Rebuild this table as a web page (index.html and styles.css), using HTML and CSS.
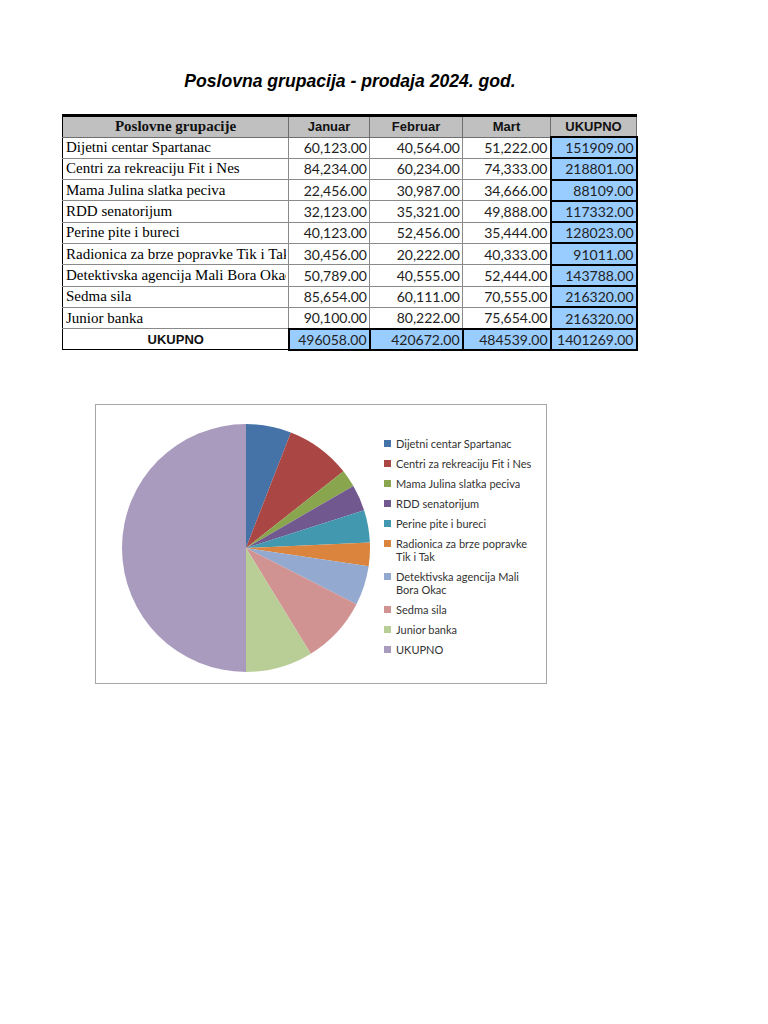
FILE: index.html
```html
<!DOCTYPE html>
<html lang="sr">
<head>
<meta charset="utf-8">
<title>Poslovna grupacija - prodaja 2024. god.</title>
<link rel="stylesheet" href="styles.css">
</head>
<body>
<div class="page">
  <h1 class="title">Poslovna grupacija - prodaja 2024. god.</h1>
  <table class="sheet">
    <colgroup>
      <col class="c-name"><col class="c-jan"><col class="c-feb"><col class="c-mar"><col class="c-tot">
    </colgroup>
    <thead>
      <tr>
        <th class="h-name">Poslovne grupacije</th>
        <th>Januar</th>
        <th>Februar</th>
        <th>Mart</th>
        <th>UKUPNO</th>
      </tr>
    </thead>
    <tbody>
      <tr><td class="name">Dijetni centar Spartanac</td><td>60,123.00</td><td>40,564.00</td><td>51,222.00</td><td class="sum">151909.00</td></tr>
      <tr><td class="name">Centri za rekreaciju Fit i Nes</td><td>84,234.00</td><td>60,234.00</td><td>74,333.00</td><td class="sum">218801.00</td></tr>
      <tr><td class="name">Mama Julina slatka peciva</td><td>22,456.00</td><td>30,987.00</td><td>34,666.00</td><td class="sum">88109.00</td></tr>
      <tr><td class="name">RDD senatorijum</td><td>32,123.00</td><td>35,321.00</td><td>49,888.00</td><td class="sum">117332.00</td></tr>
      <tr><td class="name">Perine pite i bureci</td><td>40,123.00</td><td>52,456.00</td><td>35,444.00</td><td class="sum">128023.00</td></tr>
      <tr><td class="name"><div class="clip">Radionica za brze popravke Tik i Tak</div></td><td>30,456.00</td><td>20,222.00</td><td>40,333.00</td><td class="sum">91011.00</td></tr>
      <tr><td class="name"><div class="clip">Detektivska agencija Mali Bora Okac</div></td><td>50,789.00</td><td>40,555.00</td><td>52,444.00</td><td class="sum">143788.00</td></tr>
      <tr><td class="name">Sedma sila</td><td>85,654.00</td><td>60,111.00</td><td>70,555.00</td><td class="sum">216320.00</td></tr>
      <tr><td class="name">Junior banka</td><td>90,100.00</td><td>80,222.00</td><td>75,654.00</td><td class="sum">216320.00</td></tr>
      <tr class="total"><td class="t-name">UKUPNO</td><td class="sum">496058.00</td><td class="sum">420672.00</td><td class="sum">484539.00</td><td class="sum">1401269.00</td></tr>
    </tbody>
  </table>

  <div class="chart">
    <svg class="pie" width="250" height="252" viewBox="-125 -126 250 252" aria-hidden="true">
      <path fill="#4572A7" d="M0 0 L0 -124 A124 124 0 0 1 44.84 -115.61 Z"/>
      <path fill="#AA4643" d="M0 0 L44.84 -115.61 A124 124 0 0 1 97.45 -76.68 Z"/>
      <path fill="#89A54E" d="M0 0 L97.45 -76.68 A124 124 0 0 1 107.39 -62 Z"/>
      <path fill="#71588F" d="M0 0 L107.39 -62 A124 124 0 0 1 118.13 -37.7 Z"/>
      <path fill="#4198AF" d="M0 0 L118.13 -37.7 A124 124 0 0 1 123.88 -5.41 Z"/>
      <path fill="#DB843D" d="M0 0 L123.88 -5.41 A124 124 0 0 1 122.64 18.33 Z"/>
      <path fill="#93A9CF" d="M0 0 L122.64 18.33 A124 124 0 0 1 110.48 56.3 Z"/>
      <path fill="#D19392" d="M0 0 L110.48 56.3 A124 124 0 0 1 64.79 105.72 Z"/>
      <path fill="#B9CD96" d="M0 0 L64.79 105.72 A124 124 0 0 1 0 124 Z"/>
      <path fill="#A99BBD" d="M0 0 L0 124 A124 124 0 0 1 0 -124 Z"/>
    </svg>
    <ul class="legend">
      <li><span class="sw" style="background:#4572A7"></span><span>Dijetni centar Spartanac</span></li>
      <li><span class="sw" style="background:#AA4643"></span><span>Centri za rekreaciju Fit i Nes</span></li>
      <li><span class="sw" style="background:#89A54E"></span><span>Mama Julina slatka peciva</span></li>
      <li><span class="sw" style="background:#71588F"></span><span>RDD senatorijum</span></li>
      <li><span class="sw" style="background:#4198AF"></span><span>Perine pite i bureci</span></li>
      <li><span class="sw" style="background:#DB843D"></span><span>Radionica za brze popravke Tik i Tak</span></li>
      <li><span class="sw" style="background:#93A9CF"></span><span>Detektivska agencija Mali Bora Okac</span></li>
      <li><span class="sw" style="background:#D19392"></span><span>Sedma sila</span></li>
      <li><span class="sw" style="background:#B9CD96"></span><span>Junior banka</span></li>
      <li><span class="sw" style="background:#A99BBD"></span><span>UKUPNO</span></li>
    </ul>
  </div>
</div>
</body>
</html>
```

FILE: styles.css
```css
html, body {
  margin: 0;
  padding: 0;
  background: #ffffff;
}

.page {
  padding: 68px 0 0 62px;
  width: 576px;
}

.title {
  margin: 0 0 20px 0;
  text-align: center;
  font-family: "Liberation Sans", Arial, sans-serif;
  font-weight: bold;
  font-style: italic;
  font-size: 17.6px;
  line-height: 26px;
  color: #000;
}

.sheet {
  border-collapse: collapse;
  table-layout: fixed;
  width: 574px;
  border-top: 3px solid #000;
}

.c-name { width: 226px; }
.c-jan { width: 81px; }
.c-feb { width: 93px; }
.c-mar { width: 88px; }
.c-tot { width: 86px; }

.sheet th {
  background: #c0c0c0;
  border: 1px solid #6e6e6e;
  border-top: 3px solid #000;
  height: 19px;
  padding: 0;
  font-family: "Liberation Sans", Arial, sans-serif;
  font-weight: bold;
  font-size: 13px;
  color: #111;
  text-align: center;
  vertical-align: middle;
}

.sheet th.h-name {
  font-family: "Liberation Serif", "Times New Roman", serif;
  font-size: 15px;
  border-left: 1px solid #000;
}

.sheet td {
  border: 1px solid #8a8a8a;
  height: 19.3px;
  line-height: 17px;
  padding: 0 2px 0 3px;
  font-family: Lato, "Open Sans", sans-serif;
  font-size: 14px;
  color: #222;
  text-align: right;
  vertical-align: middle;
  white-space: nowrap;
  overflow: hidden;
}

.sheet td.name {
  text-align: left;
  font-family: "Liberation Serif", "Times New Roman", serif;
  font-size: 15px;
  color: #000;
  border-left: 1px solid #000;
}

.clip {
  overflow: hidden;
  white-space: nowrap;
}

.sheet td.sum {
  background: #99ccff;
  border: 2px solid #000;
}

.sheet td.t-name {
  text-align: center;
  font-family: "Liberation Sans", Arial, sans-serif;
  font-weight: bold;
  font-size: 13px;
  color: #111;
  border: 1px solid #000;
}

.chart {
  margin: 53px 0 0 33px;
  width: 450px;
  height: 278px;
  border: 1px solid #a6a6a6;
  display: flex;
  align-items: flex-start;
  box-sizing: content-box;
}

.pie {
  display: block;
  margin: 17px 0 0 25px;
}

.legend {
  list-style: none;
  margin: 32px 0 0 13px;
  padding: 0;
  width: 150px;
  font-family: Lato, "Open Sans", sans-serif;
  font-size: 11px;
  line-height: 13px;
  color: #333;
}

.legend li {
  display: flex;
  align-items: flex-start;
  margin-bottom: 7px;
}

.sw {
  flex: none;
  width: 7px;
  height: 7px;
  margin: 3px 5px 0 0;
}
```
